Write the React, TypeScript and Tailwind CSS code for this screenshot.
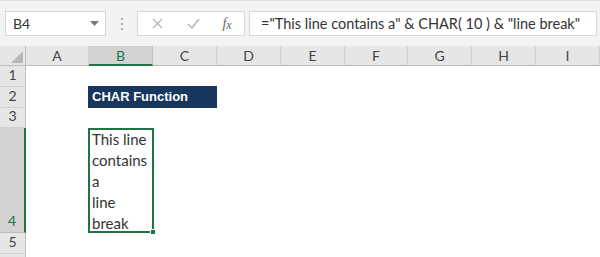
import React from "react";

const cols = ["A", "B", "C", "D", "E", "F", "G", "H", "I"];
const colW = [63, 64, 64, 64, 64, 63, 64, 64, 64];
const rowH = [21, 21, 20, 105, 21, 21];

export default function App() {
  const font = { fontFamily: "Lato, 'Open Sans', sans-serif" };
  return (
    <div className="w-[600px] h-[257px] overflow-hidden bg-white" style={font}>
      {/* Top formula bar */}
      <div className="h-[46px] bg-[#f3f3f3] border-t border-[#e2e2e2] flex items-start pt-[10px]">
        <div className="ml-[5px] w-[101px] h-[25px] bg-white border border-[#d6d6d6] flex items-center pl-[7px] pr-[6px] text-[14px] text-[#333]">
          <span className="flex-1">B4</span>
          <svg width="9" height="5" viewBox="0 0 9 5"><path d="M0 0 H9 L4.5 5 Z" fill="#7a7a7a" /></svg>
        </div>
        <div className="w-[31px] h-[25px] flex flex-col items-center justify-center gap-[3px]">
          <div className="w-[2px] h-[2px] bg-[#a8a8a8]" />
          <div className="w-[2px] h-[2px] bg-[#a8a8a8]" />
          <div className="w-[2px] h-[2px] bg-[#a8a8a8]" />
        </div>
        <div className="w-[108px] h-[25px] bg-white border border-[#d6d6d6] flex items-center">
          <div className="w-[38px] flex justify-center">
            <svg width="11" height="11" viewBox="0 0 11 11"><path d="M1 1 L10 10 M10 1 L1 10" stroke="#b5b5b5" strokeWidth="1.3" /></svg>
          </div>
          <div className="w-[34px] flex justify-center">
            <svg width="13" height="11" viewBox="0 0 13 11"><path d="M1 6 L5 10 L12 1" stroke="#b5b5b5" strokeWidth="1.5" fill="none" /></svg>
          </div>
          <div className="w-[34px] flex justify-center text-[#666] text-[14px] italic" style={{ fontFamily: "'Liberation Serif', serif" }}>
            <span>f</span><span className="text-[12px] mt-[3px]">x</span>
          </div>
        </div>
        <div className="ml-[4px] w-[348px] h-[25px] bg-white border border-[#d6d6d6] flex items-center pl-[11px] text-[14.5px] text-[#333] whitespace-nowrap">
          ="This line contains a" &amp; CHAR( 10 ) &amp; "line break"
        </div>
      </div>

      {/* Column headers */}
      <div className="flex h-[20px] bg-[#e6e6e6] border-b border-[#bdbdbd]">
        <div className="w-[26px] border-r border-[#bdbdbd] relative">
          <svg className="absolute right-[2px] bottom-[2px]" width="12" height="12" viewBox="0 0 12 12"><path d="M12 0 V12 H0 Z" fill="#b8b8b8" /></svg>
        </div>
        {cols.map((c, i) =>
          c === "B" ? (
            <div key={c} style={{ width: colW[i] }} className="bg-[#d2d2d2] border-r border-[#bdbdbd] border-b-2 border-b-[#217346] flex items-center justify-center text-[14px] text-[#217346] -mb-px">
              {c}
            </div>
          ) : (
            <div key={c} style={{ width: colW[i] }} className="border-r border-[#d0d0d0] flex items-center justify-center text-[14px] text-[#444]">
              {c}
            </div>
          )
        )}
      </div>

      {/* Body */}
      <div className="flex">
        <div className="w-[26px] flex flex-col">
          {rowH.map((h, i) =>
            i === 3 ? (
              <div key={i} style={{ height: h }} className="bg-[#d2d2d2] border-b border-[#bdbdbd] border-r-2 border-r-[#217346] flex items-end justify-center pb-[1px] text-[14px] text-[#217346]">
                {i + 1}
              </div>
            ) : (
              <div key={i} style={{ height: h }} className="bg-[#e6e6e6] border-b border-[#d0d0d0] border-r border-r-[#bdbdbd] flex items-end justify-center pb-[1px] text-[14px] text-[#444]">
                {i < 5 ? i + 1 : ""}
              </div>
            )
          )}
        </div>
        <div className="flex flex-col">
          <div className="h-[20px]" />
          <div className="h-[22px] flex">
            <div className="w-[62px]" />
            <div className="w-[129px] bg-[#17375e] flex items-center pl-[4px] text-white text-[13px] font-bold" style={{ fontFamily: "'Liberation Sans', Arial, sans-serif" }}>
              CHAR Function
            </div>
          </div>
          <div className="h-[20px]" />
          <div className="h-[105px] flex">
            <div className="w-[62px]" />
            <div className="relative w-[66px] h-[105px]">
              <div className="absolute inset-0 border-2 border-[#217346]" />
              <div className="pl-[4px] pt-[1px] text-[15px] leading-[21px] text-[#333]">
                <div>This line</div>
                <div>contains</div>
                <div>a</div>
                <div>line</div>
                <div>break</div>
              </div>
              <div className="absolute -right-[2px] -bottom-[2px] w-[6px] h-[6px] bg-[#217346] border border-white" />
            </div>
          </div>
        </div>
      </div>
    </div>
  );
}
